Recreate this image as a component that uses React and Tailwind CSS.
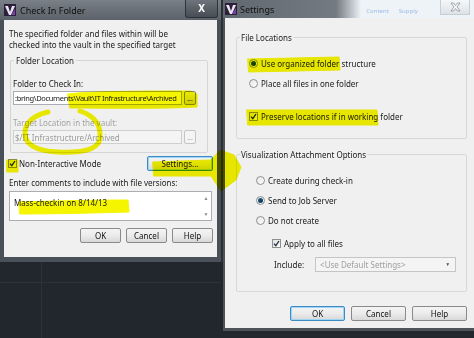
import React from "react";

function VaultIcon() {
	return (
		<svg width="12" height="12" viewBox="0 0 12 12" className="shrink-0">
			<rect x="0" y="0" width="12" height="12" fill="#2b1f3a" />
			<path d="M1 2 L4 2 L6 8 L8 2 L11 2 L7 11 L5 11 Z" fill="#e9e4f2" />
			<path d="M5 11 L7 11 L11 5 L11 11 Z" fill="#7c3fa8" />
		</svg>
	);
}

function Radio({ checked }) {
	return (
		<span className="w-[9px] h-[9px] rounded-full border border-[#8e8f8f] bg-gradient-to-br from-[#e6e6e6] to-[#fdfdfd] flex items-center justify-center shrink-0">
			{checked && (
				<span className="w-[5px] h-[5px] rounded-full bg-gradient-to-br from-[#1f5f8c] to-[#0b2f4d]" />
			)}
		</span>
	);
}

function Check({ checked }) {
	return (
		<span className="w-[9px] h-[9px] border border-[#8e8f8f] bg-gradient-to-br from-[#e3e3e3] to-[#fafafa] flex items-center justify-center shrink-0">
			{checked && (
				<svg width="7" height="7" viewBox="0 0 7 7">
					<path d="M1 3.6 L2.8 5.6 L6 1" fill="none" stroke="#1d2b3c" strokeWidth="1.3" />
				</svg>
			)}
		</span>
	);
}

function Btn({ children, w, focus }) {
	return (
		<div
			className={`${w} h-[15px] rounded-[2px] border ${
				focus ? "border-[#3c8bc4] shadow-[inset_0_0_0_1px_#9fd6f5]" : "border-[#8a8a8a]"
			} bg-gradient-to-b from-[#f4f4f4] via-[#ebebeb] to-[#d8d8d8] flex items-center justify-center text-[#111]`}
		>
			{children}
		</div>
	);
}

function Row({ children, className = "" }) {
	return <div className={`flex items-center gap-[2px] h-[11px] ${className}`}>{children}</div>;
}

export default function App() {
	return (
		<div className="w-[474px] h-[338px] relative overflow-hidden bg-[#22272e] flex font-['Noto_Sans',sans-serif] text-[8px] leading-[11px] text-[#1a1a1a]">
			{/* left column */}
			<div className="w-[223px] flex flex-col shrink-0">
				<div className="w-[223px] h-[262px] bg-[#4a5057] flex flex-col border-r-[2px] border-[#2b3036]">
					<div className="h-[20px] flex items-center pl-[4px] bg-gradient-to-b from-[#7a8087] to-[#5b6168] relative">
						<VaultIcon />
						<span className="ml-[4px] text-[9px] text-[#0e0e0e]">Check In Folder</span>
						<div className="ml-auto mr-[3px] self-start w-[33px] h-[18px] rounded-b-[3px] border border-t-0 border-[#2f343a] bg-gradient-to-b from-[#6e747b] to-[#474d54] flex items-center justify-center text-white font-bold text-[10px]">
							X
						</div>
					</div>
					<div className="flex-1 ml-[4px] mr-[4px] mb-[5px] bg-[#f0f0f0] pl-[5px] pr-[4px] pt-[8px] flex flex-col">
						<div>The specified folder and files within will be</div>
						<div>checked into the vault in the specified target</div>
						<fieldset className="mt-[5px] ml-[1px] w-[198px] border border-[#d5d5d5] rounded-[2px] pl-[2px] pb-[8px]">
							<legend className="px-[2px] ml-[1px]">Folder Location</legend>
							<div className="mt-[12px]">Folder to Check In:</div>
							<div className="mt-[2px] flex items-center gap-[2px]">
								<div className="w-[169px] h-[14px] bg-white border border-[#abadb3] flex items-center pl-[1px] overflow-hidden whitespace-nowrap text-[7.5px] tracking-[-0.35px]">
									:bring\Documents\Vault\IT Infrastructure\Archived
								</div>
								<div className="w-[12px] h-[14px] border border-[#8a8a8a] rounded-[2px] bg-gradient-to-b from-[#f4f4f4] to-[#d8d8d8] flex items-center justify-center text-[7px] leading-[7px]">
									...
								</div>
							</div>
							<div className="mt-[12px] text-[#a3a3a3]">Target Location in the vault:</div>
							<div className="mt-[2px] flex items-center gap-[2px]">
								<div className="w-[169px] h-[14px] bg-[#f4f4f4] border border-[#cfcfcf] flex items-center pl-[1px] text-[#9a9a9a] whitespace-nowrap">
									$/IT Infrastructure/Archived
								</div>
								<div className="w-[12px] h-[14px] border border-[#c4c4c4] rounded-[2px] bg-[#f4f4f4] flex items-center justify-center text-[7px] leading-[7px] text-[#a0a0a0]">
									...
								</div>
							</div>
						</fieldset>
						<div className="mt-[3px] flex items-center">
							<Row className="ml-[-1px]">
								<Check checked />
								<span>Non-Interactive Mode</span>
							</Row>
							<div className="ml-auto">
								<Btn w="w-[66px]" focus>
									Settings...
								</Btn>
							</div>
						</div>
						<div className="mt-[6px]">Enter comments to include with file versions:</div>
						<div className="mt-[3px] w-[203px] h-[30px] bg-white border border-[#abadb3] flex">
							<div className="flex-1 pl-[4px] pt-[5px]">Mass-checkin on 8/14/13</div>
							<div className="w-[10px] flex flex-col justify-between items-center py-[3px] text-[#8a8a8a] text-[5px] leading-[6px]">
								<span>▲</span>
								<span>▼</span>
							</div>
						</div>
						<div className="mt-[7px] flex justify-end gap-[5px]">
							<Btn w="w-[41px]">OK</Btn>
							<Btn w="w-[41px]">Cancel</Btn>
							<Btn w="w-[41px]">Help</Btn>
						</div>
					</div>
				</div>
				<div className="grid grid-cols-[42px_1fr] grid-rows-[21px_1fr] flex-1 mr-[2px]">
					<div className="border-r border-b border-[#2c323a]" />
					<div className="border-b border-[#2c323a]" />
					<div className="border-r border-[#2c323a]" />
					<div />
				</div>
			</div>

			{/* right window */}
			<div className="w-[251px] h-[331px] bg-[#4d535a] flex flex-col shrink-0">
				<div className="h-[18px] flex items-center pl-[2px] bg-gradient-to-r from-[#606870] via-[#747a81] via-45% to-[#eef3f8] to-55% relative">
					<VaultIcon />
					<span className="ml-[3px] text-[9px] text-[#111]">Settings</span>
					<span className="ml-[92px] mt-[4px] text-[6px] text-[#9bbbe2] blur-[0.6px]">Content</span>
					<span className="ml-[10px] mt-[4px] text-[6px] text-[#9bbbe2] blur-[0.6px]">Supply</span>
					<div className="ml-auto mr-[4px] self-start w-[30px] h-[15px] border border-t-0 border-[#c9ced4] bg-gradient-to-b from-[#f5f7f9] to-[#dde2e7] flex items-center justify-center">
						<svg width="11" height="10" viewBox="0 0 11 10">
							<path d="M1 1 L3.5 1 L5.5 3.5 L7.5 1 L10 1 L7 5 L10 9 L7.5 9 L5.5 6.5 L3.5 9 L1 9 L4 5 Z" fill="#fafafa" stroke="#8d9196" strokeWidth="0.8" />
						</svg>
					</div>
				</div>
				<div className="flex-1 ml-[2px] mb-[3px] bg-[#f0f0f0] pt-[14px] flex flex-col">
					<fieldset className="ml-[11px] w-[231px] border border-[#d8d8d8] rounded-[2px] pl-[12px] pb-[16px]">
						<legend className="ml-[-9px] px-[1px]">File Locations</legend>
						<Row className="mt-[15px] gap-[3px]">
							<Radio checked />
							<span>Use organized folder structure</span>
						</Row>
						<Row className="mt-[9px] gap-[3px]">
							<Radio />
							<span>Place all files in one folder</span>
						</Row>
						<Row className="mt-[22px] gap-[3px]">
							<Check checked />
							<span>Preserve locations if in working folder</span>
						</Row>
					</fieldset>
					<fieldset className="mt-[10px] ml-[11px] w-[231px] border border-[#d8d8d8] rounded-[2px] pl-[19px] pb-[19px]">
						<legend className="ml-[-16px] px-[1px]">Visualization Attachment Options</legend>
						<Row className="mt-[15px] gap-[3px]">
							<Radio />
							<span>Create during check-in</span>
						</Row>
						<Row className="mt-[9px] gap-[3px]">
							<Radio checked />
							<span>Send to Job Server</span>
						</Row>
						<Row className="mt-[9px] gap-[3px]">
							<Radio />
							<span>Do not create</span>
						</Row>
						<Row className="mt-[12px] ml-[16px] gap-[3px]">
							<Check checked />
							<span>Apply to all files</span>
						</Row>
						<div className="mt-[8px] ml-[18px] flex items-center">
							<span>Include:</span>
							<div className="ml-[11px] w-[141px] h-[15px] border border-[#c5c5c5] bg-[#f4f4f4] flex items-center pl-[4px] pr-[5px] text-[#a0a0a0]">
								<span>&lt;Use Default Settings&gt;</span>
								<span className="ml-auto text-[5px] text-[#555]">▼</span>
							</div>
						</div>
					</fieldset>
					<div className="mt-[14px] flex justify-end gap-[6px] pr-[7px]">
						<Btn w="w-[55px]" focus>
							OK
						</Btn>
						<Btn w="w-[55px]">Cancel</Btn>
						<Btn w="w-[55px]">Help</Btn>
					</div>
				</div>
			</div>

			{/* yellow highlighter marks drawn over the screenshot */}
			<svg className="absolute inset-0 pointer-events-none mix-blend-multiply" width="474" height="338" viewBox="0 0 474 338">
				<g fill="#f5f500" stroke="#f5f500" strokeLinejoin="round" strokeLinecap="round">
					<path d="M68 94 C90 91 150 91 190 91 L197 94 L197 107 C160 109 110 108 70 108 Z" strokeWidth="1" />
					<path d="M80 111 C95 116 101 126 100 138 C99 150 80 153 58 152 C36 151 25 145 25 133 C25 122 35 115 48 112" fill="none" strokeWidth="5" />
					<path d="M7 160 L18 160 L18 172 L7 172 Z" strokeWidth="1" />
					<path d="M153 162 L211 160 L220 150 L234 155 L241 167 L236 180 L221 191 L211 176 L154 176 Z" strokeWidth="1" />
					<path d="M19 202 C50 201 90 200 128 200 L129 212 C95 213 55 214 20 214 Z" strokeWidth="1" />
					<path d="M248 59 L339 57 L340 70 L249 72 Z" strokeWidth="1" />
					<path d="M247 110 L377 110 L378 125 L248 125 Z" strokeWidth="1" />
				</g>
			</svg>
		</div>
	);
}
